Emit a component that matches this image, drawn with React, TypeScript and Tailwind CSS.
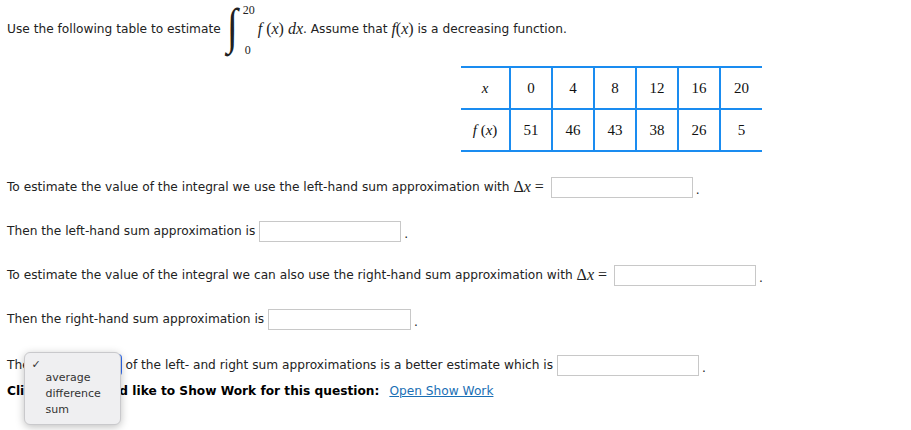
import React from "react";

const serif = { fontFamily: '"Liberation Serif", "Times New Roman", serif' };

function Box({ w = 142 }: { w?: number }) {
  return (
    <span
      className="inline-block h-[21px] border border-[#c8c8c8] bg-white align-middle"
      style={{ width: w }}
    />
  );
}

function Dx() {
  return (
    <span className="text-[16px] whitespace-pre" style={serif}>
      Δ<i>x</i> =
    </span>
  );
}

export default function App() {
  const xs = ["0", "4", "8", "12", "16", "20"];
  const fs = ["51", "46", "43", "38", "26", "5"];
  return (
    <div
      className="relative w-[911px] h-[430px] overflow-hidden bg-white text-[12.2px] text-[#222]"
      style={{ fontFamily: '"DejaVu Sans", Verdana, sans-serif' }}
    >
      <div className="pl-[7px] pt-[4px]">
        {/* Row 1 */}
        <div className="flex items-center h-[50px]">
          <span>Use the following table to estimate</span>
          <span className="relative inline-block w-[34px] h-[50px] ml-[3px]" style={serif}>
            <span className="absolute left-[3px] top-[-2px] text-[40px] leading-none italic scale-y-125 origin-top">∫</span>
            <span className="absolute left-[19px] top-[0px] text-[12px] leading-none">20</span>
            <span className="absolute left-[21px] top-[40px] text-[12px] leading-none">0</span>
          </span>
          <span className="text-[16px] italic ml-[0px] whitespace-pre" style={serif}>
            f<span className="not-italic"> (</span>x<span className="not-italic">)</span> dx
          </span>
          <span>. Assume that&nbsp;</span>
          <span className="text-[16px] italic" style={serif}>
            f<span className="not-italic">(</span>x<span className="not-italic">)</span>
          </span>
          <span>&nbsp;is a decreasing function.</span>
        </div>

        {/* Table */}
        <table
          className="ml-[454px] mt-[12px] border-collapse text-[15px] text-[#111]"
          style={serif}
        >
          <tbody>
            <tr className="border-t-2 border-b-2 border-[#1a8cf0]">
              <td className="w-[49px] h-[42px] text-center italic border-r-2 border-[#1a8cf0]">x</td>
              {xs.map((v, i) => (
                <td
                  key={v}
                  className={
                    "w-[42px] text-center " +
                    (i < 5 ? "border-r-2 border-[#1a8cf0]" : "")
                  }
                >
                  {v}
                </td>
              ))}
            </tr>
            <tr className="border-b-2 border-[#1a8cf0]">
              <td className="h-[42px] text-center italic border-r-2 border-[#1a8cf0]">
                f<span className="not-italic"> (</span>x<span className="not-italic">)</span>
              </td>
              {fs.map((v, i) => (
                <td
                  key={i}
                  className={
                    "text-center " + (i < 5 ? "border-r-2 border-[#1a8cf0]" : "")
                  }
                >
                  {v}
                </td>
              ))}
            </tr>
          </tbody>
        </table>

        <div className="flex items-center mt-[24px] h-[22px]">
          <span>To estimate the value of the integral we use the left-hand sum approximation with&nbsp;</span>
          <Dx />
          <span className="ml-[7px]"><Box w={142} /></span>
          <span className="ml-[3px] mt-[6px]">.</span>
        </div>

        <div className="flex items-center mt-[22px] h-[22px]">
          <span>Then the left-hand sum approximation is&nbsp;</span>
          <Box w={142} />
          <span className="ml-[3px] mt-[6px]">.</span>
        </div>

        <div className="flex items-center mt-[22px] h-[22px]">
          <span>To estimate the value of the integral we can also use the right-hand sum approximation with&nbsp;</span>
          <Dx />
          <span className="ml-[7px]"><Box w={142} /></span>
          <span className="ml-[3px] mt-[6px]">.</span>
        </div>

        <div className="flex items-center mt-[22px] h-[22px]">
          <span>Then the right-hand sum approximation is&nbsp;</span>
          <Box w={143} />
          <span className="ml-[3px] mt-[6px]">.</span>
        </div>

        <div className="flex items-center mt-[24px] h-[22px]">
          <span>The&nbsp;</span>
          <span className="relative inline-block w-[88px] h-[22px] rounded-[4px] border-2 border-[#2f6cf5] bg-white">
            <div className="absolute left-[-12px] top-[-4px] w-[97px] h-[73px] rounded-[6px] border border-[#c9c9cc] bg-[#efeff1] shadow-[0_2px_8px_rgba(0,0,0,0.25)] z-10">
              <div className="absolute left-[7px] top-[4px] text-[11px] text-[#333]">✓</div>
              <div className="absolute left-[21px] top-[17px] flex flex-col text-[11px] leading-[16px] text-[#333]">
                <span>average</span>
                <span>difference</span>
                <span>sum</span>
              </div>
            </div>
          </span>
          <span>&nbsp;of the left- and right sum approximations is a better estimate which is&nbsp;</span>
          <Box w={142} />
          <span className="ml-[3px] mt-[6px]">.</span>
        </div>

        <div className="flex items-center mt-[5px] h-[20px]">
          <span className="font-bold text-black">Click if you would like to Show Work for this question:</span>
          <span className="ml-[10px] text-[#1a6fb5] underline">Open Show Work</span>
        </div>
      </div>
    </div>
  );
}
